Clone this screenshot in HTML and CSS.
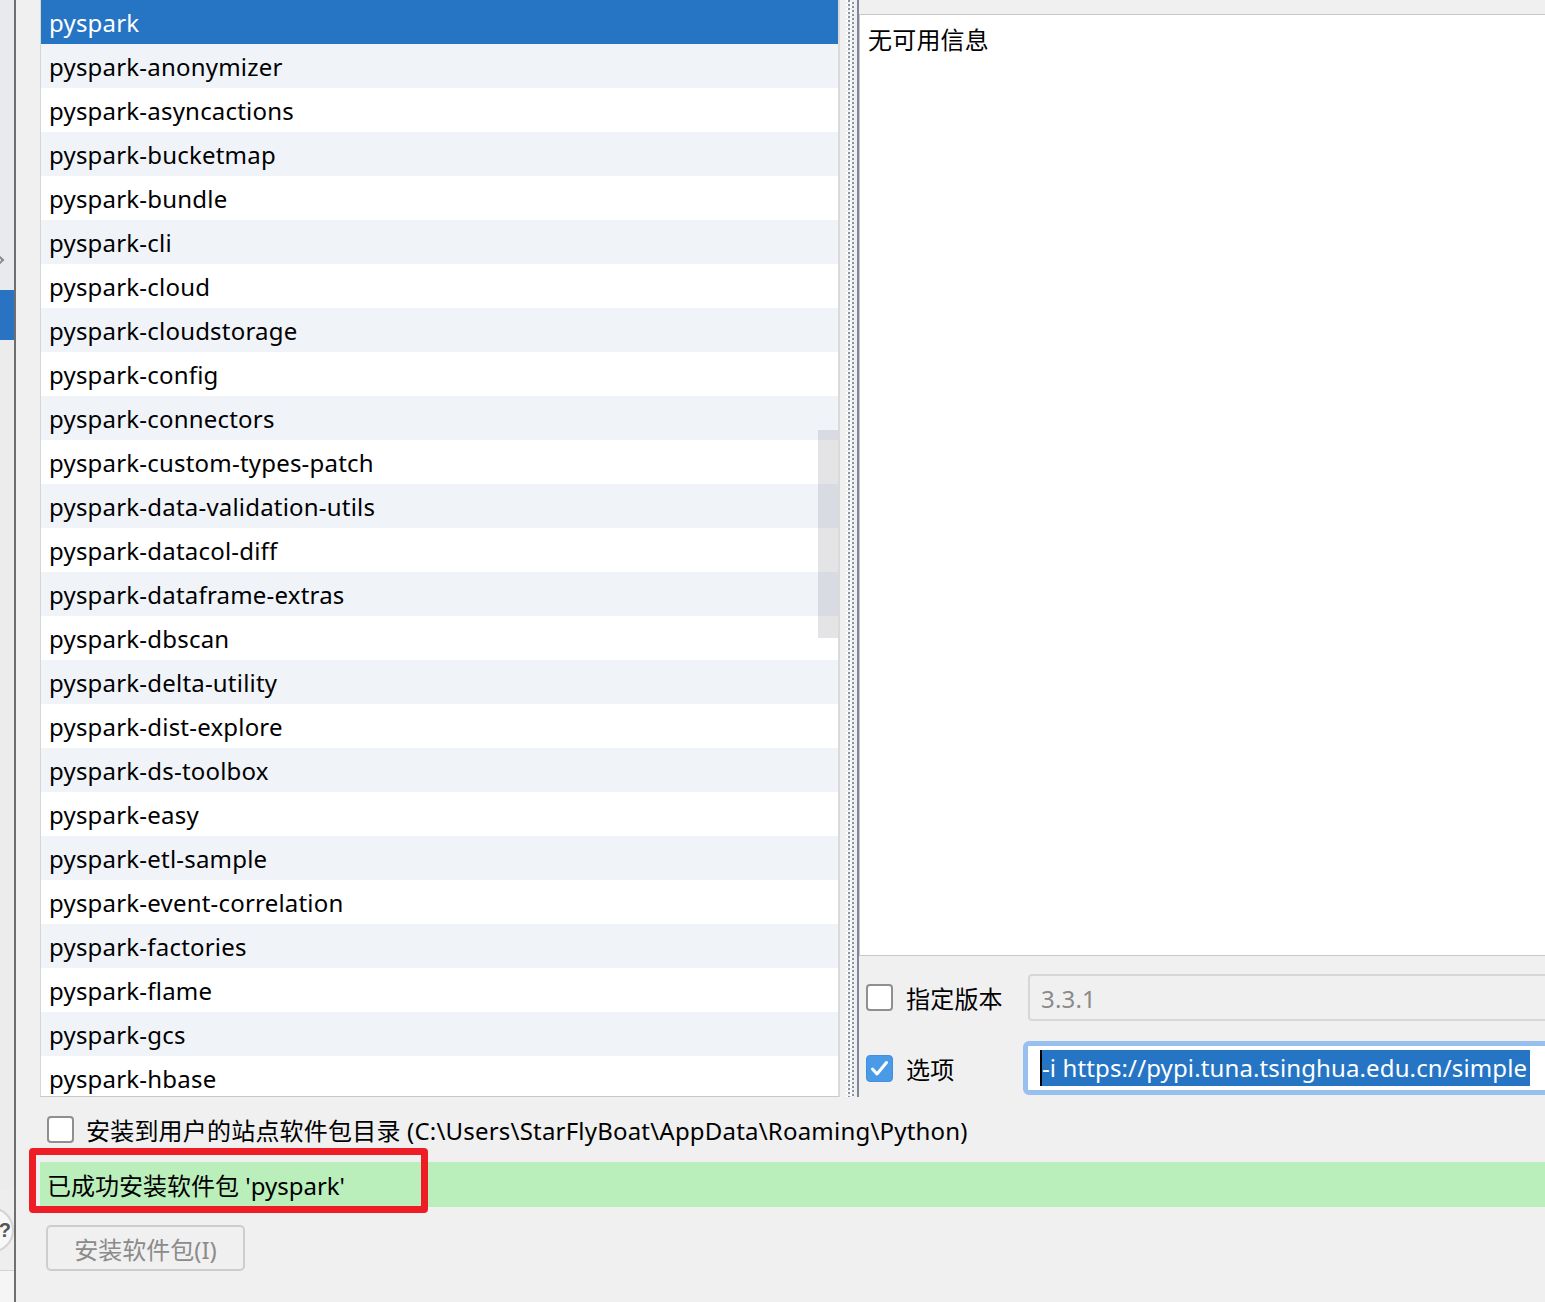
FILE: index.html
```html
<!DOCTYPE html>
<html lang="zh-CN">
<head>
<meta charset="utf-8">
<title>Install package</title>
<link rel="stylesheet" href="styles.css">
</head>
<body>
<div class="side">
  <div class="side-top"><span class="chev"></span></div>
  <div class="side-sel"></div>
  <div class="side-mid"></div>
  <div class="side-help"><div class="help-circle"><span class="help-q">?</span></div></div>
  <div class="side-foot"></div>
</div>
<div class="main">
  <div class="top">
    <div class="list">
      <div class="row sel">pyspark</div>
      <div class="row">pyspark-anonymizer</div>
      <div class="row">pyspark-asyncactions</div>
      <div class="row">pyspark-bucketmap</div>
      <div class="row">pyspark-bundle</div>
      <div class="row">pyspark-cli</div>
      <div class="row">pyspark-cloud</div>
      <div class="row">pyspark-cloudstorage</div>
      <div class="row">pyspark-config</div>
      <div class="row">pyspark-connectors</div>
      <div class="row">pyspark-custom-types-patch</div>
      <div class="row">pyspark-data-validation-utils</div>
      <div class="row">pyspark-datacol-diff</div>
      <div class="row">pyspark-dataframe-extras</div>
      <div class="row">pyspark-dbscan</div>
      <div class="row">pyspark-delta-utility</div>
      <div class="row">pyspark-dist-explore</div>
      <div class="row">pyspark-ds-toolbox</div>
      <div class="row">pyspark-easy</div>
      <div class="row">pyspark-etl-sample</div>
      <div class="row">pyspark-event-correlation</div>
      <div class="row">pyspark-factories</div>
      <div class="row">pyspark-flame</div>
      <div class="row">pyspark-gcs</div>
      <div class="row">pyspark-hbase</div>
      <div class="thumb"></div>
    </div>
    <div class="splitter"><div class="grip"></div></div>
    <div class="detail">
      <div class="desc">无可用信息</div>
      <div class="opt-row first">
        <span class="cb"></span>
        <span class="lbl">指定版本</span>
        <div class="field disabled">3.3.1</div>
      </div>
      <div class="opt-row second">
        <span class="cb checked"><svg viewBox="0 0 27 27" width="27" height="27"><polyline points="6.5,14 11,19 20.5,7.5" fill="none" stroke="#fff" stroke-width="3" stroke-linecap="round" stroke-linejoin="round"/></svg></span>
        <span class="lbl">选项</span>
        <div class="field focused"><span class="selected">-i https://pypi.tuna.tsinghua.edu.cn/simple</span></div>
      </div>
    </div>
  </div>
  <div class="bottom">
    <div class="user-row">
      <span class="cb"></span>
      <span class="user-lbl">安装到用户的站点软件包目录 (C:\Users\StarFlyBoat\AppData\Roaming\Python)</span>
    </div>
    <div class="status">已成功安装软件包 'pyspark'</div>
    <div class="actions"><button class="btn" type="button" disabled>安装软件包(I)</button></div>
  </div>
  <div class="mark"></div>
</div>
</body>
</html>
```
FILE: styles.css
```css
html, body {
  margin: 0;
  padding: 0;
}
body {
  width: 1545px;
  height: 1302px;
  overflow: hidden;
  display: flex;
  background: #f0f0f0;
  font-family: "Noto Sans", "Noto Sans CJK SC", sans-serif;
  font-size: 24px;
  letter-spacing: 0.2px;
  color: #000;
}

/* left edge of the window behind */
.side {
  flex: none;
  width: 14px;
  border-right: 2px solid #6f6f6f;
  display: flex;
  flex-direction: column;
  overflow: hidden;
  background: #e8eaed;
}
.side-top {
  height: 290px;
  position: relative;
}
.chev {
  position: absolute;
  left: 0;
  top: 257px;
  width: 4px;
  height: 4px;
  border-right: 2px solid #8a8a8a;
  border-bottom: 2px solid #8a8a8a;
  transform: rotate(-45deg);
  margin-left: -3px;
}
.side-sel {
  height: 50px;
  background: #2a73c2;
}
.side-mid {
  flex: 1;
  background: #ececec;
}
.side-help {
  height: 80px;
  background: #eeeeee;
  display: flex;
  align-items: center;
}
.help-circle {
  flex: none;
  width: 46px;
  height: 46px;
  box-sizing: border-box;
  border: 2px solid #d3d3d3;
  border-radius: 50%;
  margin-left: -32px;
  background: #f7f7f7;
  display: flex;
  align-items: center;
  justify-content: flex-end;
  padding-right: 1px;
}
.help-q {
  color: #555;
  font-family: "Liberation Sans", sans-serif;
  font-weight: bold;
  font-size: 20px;
  line-height: 24px;
  letter-spacing: 0;
}
.side-foot {
  height: 31px;
  border-top: 1px solid #d2d2d2;
  background: #f5f5f5;
}

.main {
  flex: 1;
  min-width: 0;
  display: flex;
  flex-direction: column;
  position: relative;
}
.top {
  display: flex;
  height: 1097px;
  padding-left: 24px;
}

/* package list */
.list {
  flex: none;
  width: 797px;
  border-left: 1px solid #d6d6d6;
  border-right: 2px solid #dadada;
  border-bottom: 1px solid #c9c9c9;
  background: #fff;
  overflow: hidden;
  position: relative;
}
.row {
  height: 44px;
  line-height: 46px;
  padding-left: 8px;
  white-space: nowrap;
  overflow: hidden;
}
.row:nth-child(even) {
  background: #f0f4f9;
}
.row.sel {
  background: #2675c4;
  color: #fff;
}
.thumb {
  position: absolute;
  right: 0;
  top: 430px;
  width: 20px;
  height: 208px;
  background: rgba(120, 122, 130, 0.2);
}

/* splitter */
.splitter {
  flex: none;
  width: 17px;
  border-right: 2px solid #7c8898;
  display: flex;
}
.grip {
  width: 8px;
  margin-left: 6px;
  background-image:
    linear-gradient(#ffffff 50%, transparent 50%),
    linear-gradient(#8995a6 50%, transparent 50%),
    linear-gradient(#ffffff 50%, transparent 50%),
    linear-gradient(#8995a6 50%, transparent 50%);
  background-size: 2px 4px;
  background-repeat: repeat-y;
  background-position: 0 0, 2px 0, 4px 2px, 6px 2px;
}

/* right detail panel */
.detail {
  flex: 1;
  min-width: 0;
  margin-right: -20px;
  display: flex;
  flex-direction: column;
}
.desc {
  margin-top: 14px;
  height: 942px;
  box-sizing: border-box;
  border: 1px solid #c9c9c9;
  background: #fff;
  padding: 8px 8px;
  line-height: 34px;
}
.opt-row {
  display: flex;
  align-items: center;
  padding-left: 7px;
}
.opt-row.first {
  margin-top: 18px;
  height: 47px;
}
.opt-row.second {
  margin-top: 20px;
  height: 54px;
}
.cb {
  flex: none;
  width: 27px;
  height: 27px;
  box-sizing: border-box;
  border: 2px solid #8f8f8f;
  border-radius: 4px;
  background: #fff;
  display: block;
}
.cb.checked {
  border: 1px solid #3f90e0;
  background: #4a9be7;
  position: relative;
}
.cb.checked svg {
  display: block;
  margin: -1px;
}
.lbl {
  flex: none;
  width: 122px;
  margin-left: 13px;
}
.field {
  flex: 1;
  min-width: 0;
  box-sizing: border-box;
  white-space: nowrap;
}
.field.disabled {
  height: 47px;
  border: 2px solid #d7d7d7;
  border-radius: 4px;
  background: #f0f0f0;
  color: #8a8a8a;
  padding-left: 11px;
  line-height: 45px;
}
.field.focused {
  height: 54px;
  margin-left: -5px;
  border: 5px solid #98c0ef;
  border-radius: 6px;
  background: #fff;
  padding-left: 12px;
  display: flex;
  align-items: center;
}
.selected {
  background: #2675c4;
  color: #fff;
  line-height: 36px;
  border-left: 2px solid #000;
  padding-right: 3px;
  letter-spacing: 0.12px;
}

/* bottom area */
.bottom {
  padding-left: 24px;
}
.user-row {
  margin-top: 19px;
  height: 27px;
  padding-left: 7px;
  display: flex;
  align-items: center;
}
.user-lbl {
  margin-left: 12px;
  white-space: nowrap;
  letter-spacing: 0.2px;
}
.status {
  margin-top: 19px;
  height: 45px;
  line-height: 47px;
  padding-left: 7px;
  background: #baeebb;
  white-space: nowrap;
  letter-spacing: 0;
}
.actions {
  margin-top: 18px;
  padding-left: 6px;
}
.btn {
  width: 199px;
  height: 46px;
  box-sizing: border-box;
  border: 2px solid #cdcdcd;
  border-radius: 5px;
  background: #f0f0f0;
  color: #8b8b8b;
  font: inherit;
  padding: 0;
}

/* red annotation frame */
.mark {
  position: absolute;
  left: 13px;
  top: 1148px;
  width: 399px;
  height: 65px;
  box-sizing: border-box;
  border: 7px solid #ee1c25;
  border-radius: 4px;
}
```
